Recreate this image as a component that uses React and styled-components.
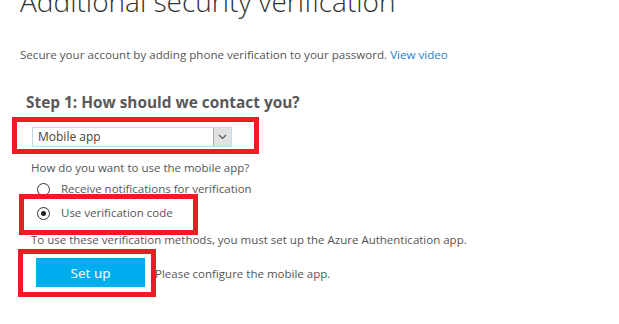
import React from "react";
import styled, { createGlobalStyle } from "styled-components";

const Global = createGlobalStyle`
  html, body { margin: 0; padding: 0; background: #ffffff; }
  body { font-family: "Open Sans", "Noto Sans", sans-serif; color: #555555; }
  * { box-sizing: border-box; }
`;

const Page = styled.div`
  width: 619px;
  height: 324px;
  overflow: hidden;
  display: flex;
  flex-direction: column;
  align-items: flex-start;
`;

const Title = styled.h1`
  margin: -17px 0 0 20px;
  font-weight: 300;
  font-size: 28px;
  line-height: 36px;
  color: #333333;
  white-space: nowrap;
`;

const Intro = styled.p`
  margin: 28px 0 0 20px;
  font-size: 11.6px;
  line-height: 16px;
  color: #555555;
  white-space: nowrap;
`;

const Link = styled.a`
  color: #1e7fc8;
  text-decoration: none;
`;

const StepHeading = styled.h2`
  margin: 30px 0 0 26px;
  font-size: 15.4px;
  font-weight: 700;
  line-height: 20px;
  color: #595959;
  white-space: nowrap;
`;

const Annotation = styled.div`
  border: 5px solid #ed1c24;
  margin-left: ${(p) => p.$left}px;
  margin-top: ${(p) => p.$top || 0}px;
  padding: ${(p) => p.$pad};
  width: ${(p) => p.$w}px;
  height: ${(p) => p.$h}px;
  display: flex;
  align-items: flex-start;
`;

const Select = styled.div`
  width: 200px;
  height: 20px;
  border: 1px solid #c5d8e8;
  background: #ffffff;
  display: flex;
  align-items: stretch;
`;

const SelectValue = styled.span`
  flex: 1;
  font-size: 12px;
  line-height: 18px;
  padding-left: 5px;
  color: #444444;
`;

const SelectArrow = styled.span`
  width: 18px;
  background: #e1e1e1;
  border-left: 1px solid #a9a9a9;
  display: flex;
  align-items: center;
  justify-content: center;
`;

const Question = styled.p`
  margin: 6px 0 0 31px;
  font-size: 11.5px;
  line-height: 16px;
  color: #555555;
  white-space: nowrap;
`;

const Option = styled.label`
  display: flex;
  align-items: center;
  gap: 11px;
  margin-left: ${(p) => p.$left}px;
  margin-top: ${(p) => p.$top || 0}px;
  font-size: 11.5px;
  line-height: 16px;
  color: #555555;
  white-space: nowrap;
`;

const Radio = styled.span`
  width: 13px;
  height: 13px;
  border-radius: 50%;
  border: 1.5px solid #333333;
  background: #ffffff;
  display: flex;
  align-items: center;
  justify-content: center;
  &::after {
    content: "";
    width: 5px;
    height: 5px;
    border-radius: 50%;
    background: ${(p) => (p.$checked ? "#222222" : "transparent")};
  }
`;

const Note = styled.p`
  margin: -3px 0 0 31px;
  font-size: 11.5px;
  line-height: 16px;
  color: #555555;
  white-space: nowrap;
`;

const ActionRow = styled.div`
  display: flex;
  align-items: center;
  margin-top: 1px;
`;

const SetupButton = styled.button`
  width: 109px;
  height: 29px;
  border: none;
  background: #00adef;
  color: #ffffff;
  font-family: "Open Sans", "Noto Sans", sans-serif;
  font-size: 13.5px;
  padding: 0;
`;

const Hint = styled.span`
  margin-left: -1px;
  font-size: 11.5px;
  color: #555555;
  white-space: nowrap;
`;

export default function App() {
  return (
    <>
      <Global />
      <Page>
        <Title>Additional security verification</Title>
        <Intro>
          Secure your account by adding phone verification to your password.{" "}
          <Link href="#">View video</Link>
        </Intro>
        <StepHeading>Step 1: How should we contact you?</StepHeading>
        <Annotation $left={12} $top={4} $w={247} $h={37} $pad="5px 0 0 15px">
          <Select>
            <SelectValue>Mobile app</SelectValue>
            <SelectArrow>
              <svg width="9" height="6" viewBox="0 0 9 6">
                <path d="M1 1l3.5 3.5L8 1" fill="none" stroke="#555" strokeWidth="1.2" />
              </svg>
            </SelectArrow>
          </Select>
        </Annotation>
        <Question>How do you want to use the mobile app?</Question>
        <Option $left={37} $top={5}>
          <Radio />
          Receive notifications for verification
        </Option>
        <Annotation $left={19} $top={-3} $w={179} $h={41} $pad="6px 0 0 13px">
          <Option $left={0}>
            <Radio $checked />
            Use verification code
          </Option>
        </Annotation>
        <Note>To use these verification methods, you must set up the Azure Authentication app.</Note>
        <ActionRow>
          <Annotation $left={18} $w={138} $h={48} $pad="4px 0 0 13px">
            <SetupButton>Set up</SetupButton>
          </Annotation>
          <Hint>Please configure the mobile app.</Hint>
        </ActionRow>
      </Page>
    </>
  );
}
